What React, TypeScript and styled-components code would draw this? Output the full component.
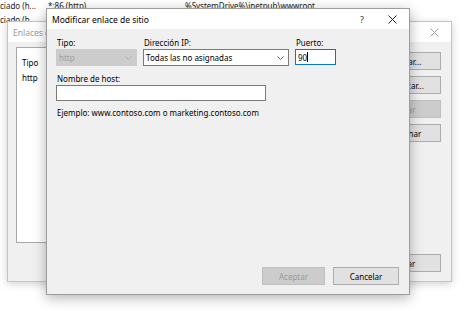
import React from "react";
import styled, { createGlobalStyle } from "styled-components";

const GlobalStyle = createGlobalStyle`
  html, body {
    margin: 0;
    padding: 0;
    background: #ffffff;
  }
  body {
    font-family: "Noto Sans", "Open Sans", sans-serif;
    font-size: 8px;
    color: #000000;
  }
`;

export default function App() {
  return (
    <>
      <GlobalStyle />
      <Desktop>
        <SiteList>
          <SiteRow>
            <Cell $width={48}>ciado (h...</Cell>
            <Cell $width={137}>*:86 (http)</Cell>
            <Cell $width={200}>%SystemDrive%\inetpub\wwwroot</Cell>
          </SiteRow>
          <SiteRow>
            <Cell $width={48}>ciado (h...</Cell>
          </SiteRow>
        </SiteList>

        <BackWindow>
          <TitleBar>
            <TitleText $inactive>Enlaces de sitio</TitleText>
            <TitleButtons>
              <CloseIcon color="#a0a0a0" />
            </TitleButtons>
          </TitleBar>
          <BackBody>
            <BindingList>
              <ListRow>Tipo</ListRow>
              <ListRow>http</ListRow>
            </BindingList>
            <SideButtons>
              <Button>Agregar...</Button>
              <Button>Modificar...</Button>
              <Button disabled>Quitar</Button>
              <Button>Examinar</Button>
              <Spacer />
              <Button>Cerrar</Button>
            </SideButtons>
          </BackBody>
        </BackWindow>

        <FrontWindow>
          <TitleBar>
            <TitleText>Modificar enlace de sitio</TitleText>
            <TitleButtons>
              <HelpGlyph>?</HelpGlyph>
              <CloseIcon color="#222222" />
            </TitleButtons>
          </TitleBar>
          <FrontBody>
            <FieldRow>
              <Field $width={81}>
                <Label>Tipo:</Label>
                <Select $disabled>
                  <span>http</span>
                  <Chevron color="#b0b0b0" />
                </Select>
              </Field>
              <Field $width={146}>
                <Label>Dirección IP:</Label>
                <Select>
                  <span>Todas las no asignadas</span>
                  <Chevron color="#606060" />
                </Select>
              </Field>
              <Field $width={41}>
                <Label>Puerto:</Label>
                <TextBox $focused>
                  90<Caret />
                </TextBox>
              </Field>
            </FieldRow>
            <Field $width={210} $top={7}>
              <Label>Nombre de host:</Label>
              <TextBox />
            </Field>
            <Hint>Ejemplo: www.contoso.com o marketing.contoso.com</Hint>
            <Footer>
              <Button disabled $width={63}>
                Aceptar
              </Button>
              <Button $width={66}>Cancelar</Button>
            </Footer>
          </FrontBody>
        </FrontWindow>
      </Desktop>
    </>
  );
}

function CloseIcon({ color }: { color: string }) {
  return (
    <svg width="9" height="9" viewBox="0 0 9 9">
      <path d="M0.5 0.5 L8.5 8.5 M8.5 0.5 L0.5 8.5" stroke={color} strokeWidth="1" />
    </svg>
  );
}

function Chevron({ color }: { color: string }) {
  return (
    <svg width="7" height="4" viewBox="0 0 7 4">
      <path d="M0.5 0.5 L3.5 3.5 L6.5 0.5" stroke={color} strokeWidth="1" fill="none" />
    </svg>
  );
}

const Desktop = styled.div`
  position: relative;
  width: 474px;
  height: 311px;
  overflow: hidden;
  background: #ffffff;
`;

const SiteList = styled.div`
  display: flex;
  flex-direction: column;
  margin-top: -2px;
`;

const SiteRow = styled.div`
  display: flex;
  height: 14px;
  align-items: center;
  color: #1a1a1a;
`;

const Cell = styled.div<{ $width: number }>`
  width: ${(p) => p.$width}px;
  white-space: nowrap;
  flex-shrink: 0;
`;

const BackWindow = styled.div`
  position: absolute;
  left: 7px;
  top: 21px;
  width: 445px;
  height: 261px;
  box-sizing: border-box;
  display: flex;
  flex-direction: column;
  background: #f0f0f0;
  border: 1px solid #c4c4c4;
  box-shadow: 0 2px 8px rgba(0, 0, 0, 0.18);
`;

const FrontWindow = styled.div`
  position: absolute;
  left: 46px;
  top: 8px;
  width: 364px;
  height: 287px;
  box-sizing: border-box;
  display: flex;
  flex-direction: column;
  background: #f0f0f0;
  border: 1px solid #9c9c9c;
  box-shadow: 0 3px 12px rgba(0, 0, 0, 0.3);
`;

const TitleBar = styled.div`
  height: 20px;
  flex-shrink: 0;
  display: flex;
  align-items: center;
  justify-content: space-between;
  padding: 0 12px 0 5px;
  background: #ffffff;
`;

const TitleText = styled.div<{ $inactive?: boolean }>`
  font-size: 8.5px;
  color: ${(p) => (p.$inactive ? "#999999" : "#000000")};
  white-space: nowrap;
`;

const TitleButtons = styled.div`
  display: flex;
  align-items: center;
  gap: 24px;
`;

const HelpGlyph = styled.span`
  font-size: 9px;
  color: #333333;
`;

const BackBody = styled.div`
  flex: 1;
  display: flex;
  padding: 5px 10px 9px 8px;
  gap: 6px;
`;

const BindingList = styled.div`
  flex: 1;
  height: 196px;
  box-sizing: border-box;
  background: #ffffff;
  border: 1px solid #a8a8a8;
  padding: 7px 5px;
`;

const ListRow = styled.div`
  height: 15px;
  line-height: 15px;
  white-space: nowrap;
`;

const SideButtons = styled.div`
  width: 75px;
  display: flex;
  flex-direction: column;
  gap: 6px;
  padding-top: 5px;
`;

const Spacer = styled.div`
  flex: 1;
`;

const Button = styled.button<{ $width?: number }>`
  width: ${(p) => (p.$width ? `${p.$width}px` : "100%")};
  height: 18px;
  padding: 0;
  box-sizing: border-box;
  font-family: "Noto Sans", "Open Sans", sans-serif;
  font-size: 8px;
  color: #000000;
  background: #e1e1e1;
  border: 1px solid #adadad;
  white-space: nowrap;
  &:disabled {
    color: #9a9a9a;
    background: #cccccc;
    border-color: #bfbfbf;
  }
`;

const FrontBody = styled.div`
  flex: 1;
  display: flex;
  flex-direction: column;
  padding: 8px 10px 9px 9px;
`;

const FieldRow = styled.div`
  display: flex;
  gap: 6px;
`;

const Field = styled.div<{ $width: number; $top?: number }>`
  width: ${(p) => p.$width}px;
  margin-top: ${(p) => p.$top ?? 0}px;
  display: flex;
  flex-direction: column;
  gap: 1px;
`;

const Label = styled.div`
  height: 11px;
  line-height: 11px;
  padding-left: 1px;
  color: #000000;
  white-space: nowrap;
`;

const Select = styled.div<{ $disabled?: boolean }>`
  height: 17px;
  box-sizing: border-box;
  display: flex;
  align-items: center;
  justify-content: space-between;
  padding: 0 4px 0 2px;
  background: ${(p) => (p.$disabled ? "#cccccc" : "#ffffff")};
  border: 1px solid ${(p) => (p.$disabled ? "#cccccc" : "#7a7a7a")};
  color: ${(p) => (p.$disabled ? "#a0a0a0" : "#000000")};
  white-space: nowrap;
`;

const TextBox = styled.div<{ $focused?: boolean }>`
  height: 16px;
  box-sizing: border-box;
  display: flex;
  align-items: center;
  padding: 0 2px;
  background: #ffffff;
  border: 1px solid ${(p) => (p.$focused ? "#0078d7" : "#7a7a7a")};
`;

const Caret = styled.span`
  display: inline-block;
  width: 0;
  height: 10px;
  border-left: 1px solid #000000;
`;

const Hint = styled.div`
  margin-top: 6px;
  padding-left: 1px;
  line-height: 11px;
  white-space: nowrap;
`;

const Footer = styled.div`
  margin-top: auto;
  display: flex;
  justify-content: flex-end;
  gap: 8px;
`;
